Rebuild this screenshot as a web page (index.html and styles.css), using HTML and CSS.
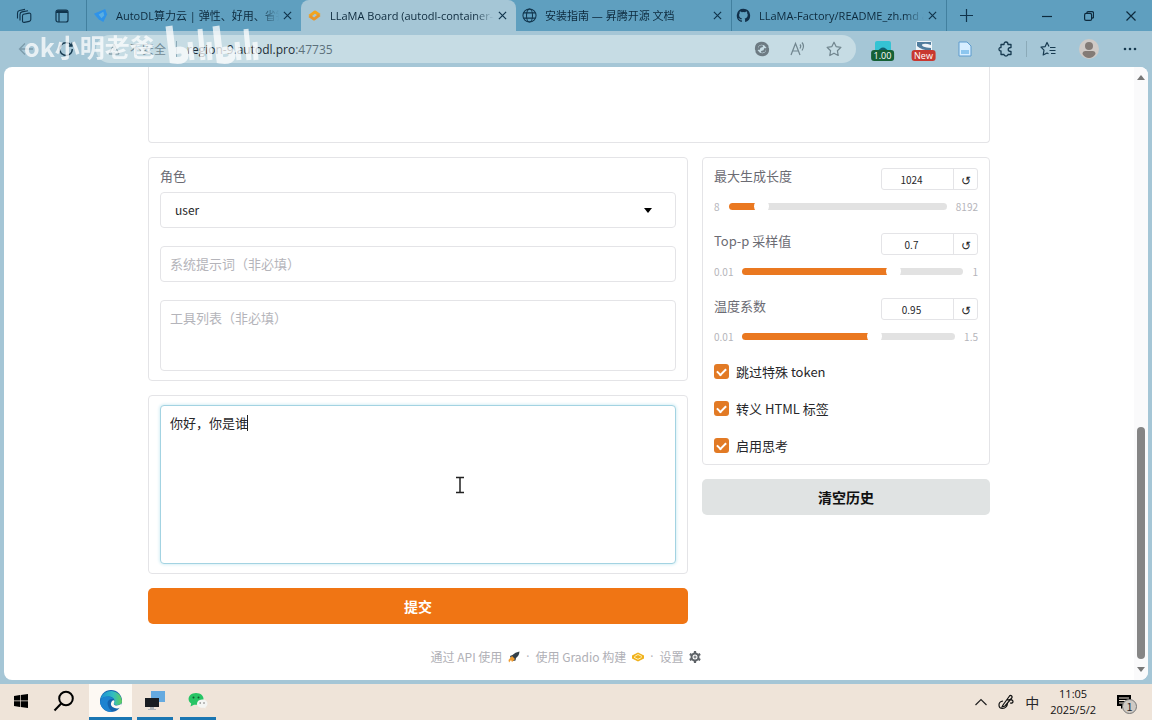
FILE: index.html
```html
<!DOCTYPE html>
<html lang="zh-CN">
<head>
    <meta charset="UTF-8">
    <title>LLaMA Board</title>
    <meta name="viewport" content="width=device-width, initial-scale=1">
    <link rel="stylesheet" href="styles.css">
</head>
<body>
    <header class="tabbar">
        <div class="tab-tools">
            <button type="button" aria-label="工作区">
                <svg width="16" height="16" viewBox="0 0 16 16" fill="none" stroke="#10344c" stroke-width="1.1"><path d="M7.500 6.200l5.500-1.100q1.800-.2 1.800 1.500v5q0 1.500-1.500 1.800l-5 1q-1.800.2-1.800-1.500V8q0-1.500 1-1.800z"/><path d="M4 12.500V6.500Q4 4.300 6 3.900L12 2.800M1.500 10.500V5Q1.500 3 3.500 2.500L9 1.400"/></svg>
            </button>
            <button type="button" aria-label="标签页操作">
                <svg width="16" height="16" viewBox="0 0 16 16" fill="none" stroke="#10344c" stroke-width="1.200"><rect x="2" y="2" width="12" height="12" rx="2"/><path d="M2 4.500h12M5 5v9" /><path d="M2.500 3.500h11" stroke-width="2.500"/></svg>
            </button>
        </div>
        <nav class="tabs">
            <a class="tab first" href="#">
                <svg class="tab-icon" viewBox="0 0 16 16"><path d="M1 6 13 1l2 6-4 8-5-3z" fill="#2e93ea"/><path d="M6 7l5-3 1 4-3 3z" fill="#5aaee2"/></svg>
                <span class="tab-title">AutoDL算力云 | 弹性、好用、省钱</span>
                <svg class="close" viewBox="0 0 10 10"><path d="M1 1l8 8M9 1l-8 8"/></svg>
            </a>
            <a class="tab active" href="#">
                <svg class="tab-icon" viewBox="0 0 16 16"><path d="M1.500 7.500 7.500 3q1-.5 2 0l5 3.500-2.500 2L8.500 6 4 9.500z" fill="#f2a51f"/><path d="M14.500 8.500 8.500 13q-1 .5-2 0l-5-3.500 2.500-2L7.500 10 12 6.500z" fill="#e8962a"/></svg>
                <span class="tab-title">LLaMA Board (autodl-container-a</span>
                <svg class="close" viewBox="0 0 10 10"><path d="M1 1l8 8M9 1l-8 8"/></svg>
            </a>
            <a class="tab" href="#">
                <svg class="tab-icon" viewBox="0 0 16 16" fill="none" stroke="#10344c" stroke-width="1.100"><circle cx="8" cy="8" r="7"/><ellipse cx="8" cy="8" rx="3.200" ry="7"/><path d="M1.800 5.200h12.400M1.800 10.800h12.400"/></svg>
                <span class="tab-title">安装指南 — 昇腾开源 文档</span>
                <svg class="close" viewBox="0 0 10 10"><path d="M1 1l8 8M9 1l-8 8"/></svg>
            </a>
            <a class="tab lined" href="#">
                <svg class="tab-icon" viewBox="0 0 16 16"><path fill="#12304a" d="M8 .8a7.200 7.200 0 0 0-2.300 14c.4.100.5-.2.500-.4v-1.300c-2 .4-2.500-.9-2.500-.9-.3-.8-.8-1-.8-1-.7-.5 0-.5 0-.5.700.1 1.100.8 1.100.8.700 1.100 1.700.8 2.100.6.100-.5.300-.8.500-1-1.600-.2-3.300-.8-3.300-3.600 0-.8.300-1.400.7-1.900 0-.2-.3-.9.100-1.900 0 0 .6-.2 2 .7a7 7 0 0 1 3.600 0c1.400-.9 2-.7 2-.7.400 1 .1 1.700.1 1.900.5.500.7 1.100.7 1.900 0 2.800-1.700 3.400-3.300 3.600.3.200.5.700.5 1.300v2c0 .2.100.5.500.4A7.200 7.200 0 0 0 8 .8z"/></svg>
                <span class="tab-title">LLaMA-Factory/README_zh.md a</span>
                <svg class="close" viewBox="0 0 10 10"><path d="M1 1l8 8M9 1l-8 8"/></svg>
            </a>
            <button type="button" class="new-tab" aria-label="新建标签页"><svg width="13" height="13" viewBox="0 0 13 13" stroke="#10344c" stroke-width="1.200"><path d="M6.500 0v13M0 6.500h13"/></svg></button>
        </nav>
        <div class="win-buttons">
            <button type="button" aria-label="最小化"><svg width="10" height="10" viewBox="0 0 10 10"><path d="M0 5.500h10"/></svg></button>
            <button type="button" aria-label="还原"><svg width="10" height="10" viewBox="0 0 10 10"><rect x=".6" y="2.400" width="7" height="7" rx="1.500"/><path d="M3 2.300V1.600q0-1 1-1h4q1.500 0 1.500 1.500v4q0 1-1.500 1"/></svg></button>
            <button type="button" aria-label="关闭"><svg width="10" height="10" viewBox="0 0 10 10"><path d="M.5.5l9 9M9.500.5l-9 9"/></svg></button>
        </div>
    </header>

    <div class="toolbar">
        <div class="nav-buttons">
            <button type="button" aria-label="后退"><svg width="16" height="14" viewBox="0 0 16 14" fill="none" stroke="#7c9bab" stroke-width="1.300"><path d="M15 7H1.500M7 1.500 1.500 7 7 12.500"/></svg></button>
            <button type="button" aria-label="刷新"><svg width="16" height="16" viewBox="0 0 16 16" fill="none" stroke="#173a50" stroke-width="1.400"><path d="M13.500 5A6.300 6.300 0 1 0 14.300 8M14 1.500V5h-3.500"/></svg></button>
        </div>
        <div class="address">
            <svg width="12" height="12" viewBox="0 0 12 12" fill="none" stroke="#6f8894"><path d="M6 1l5 10H1zM6 4.500v3.500M6 9v1"/></svg>
            <span class="insecure">不安全</span>
            <span class="divider"></span>
            <span class="url">region-9.autodl.pro<span class="port">:47735</span></span>
            <div class="address-icons">
                <svg width="16" height="16" viewBox="0 0 16 16" fill="none" stroke="#6d7b83" stroke-linecap="round"><path d="M2.500 8.500Q1.800 3 7 2.200q4-.4 6 3" stroke-width="3"/><path d="M13.500 7.500q.7 5.500-4.500 6.300-4 .4-6-3" stroke-width="3"/><path d="M5 8q0-2.500 3-2.700M11 8q0 2.500-3 2.700" stroke-width="2"/></svg>
                <svg width="16" height="16" viewBox="0 0 16 16" fill="none" stroke="#71868f" stroke-width="1.200"><path d="M1 14 5.500 2.500 10 14M2.700 10h5.600M10 3.500q1.500 1.500 0 4M12 1.500q3 3.500 0 8"/></svg>
                <svg width="16" height="16" viewBox="0 0 16 16" fill="none" stroke="#71868f" stroke-width="1.200" stroke-linejoin="round"><path d="M8 1.200l2.100 4.400 4.800.7-3.500 3.400.8 4.800L8 12.200l-4.200 2.300.8-4.800L1.100 6.300l4.800-.7z"/></svg>
            </div>
        </div>
        <div class="extensions">
            <button type="button" class="ext" aria-label="倍速"><svg width="16" height="16" viewBox="0 0 16 16"><rect width="16" height="16" rx="2" fill="#35c3d3"/><path d="M2 11q6-9 12 0z" fill="#10606f"/></svg><span class="badge green">1.00</span></button>
            <button type="button" class="ext" aria-label="扩展"><svg width="16" height="16" viewBox="0 0 16 16"><rect width="16" height="16" rx="2" fill="#eef4f8"/><path d="M1 1h14v3Q9 2 6 3.500 5 6 15 7v3Q5 9 1 5z" fill="#507d9e"/></svg><span class="badge red">New</span></button>
            <button type="button" class="ext" aria-label="文档"><svg width="14" height="16" viewBox="0 0 14 16"><path d="M1 1h8l4 4v10H1z" fill="#d7eeff" stroke="#5d9bce"/><path d="M3 9h8v4H3z" fill="#8cc6ef"/></svg></button>
            <button type="button" class="ext" aria-label="扩展管理"><svg width="16" height="16" viewBox="0 0 16 16" fill="none" stroke="#173a50" stroke-width="1.300" stroke-linejoin="round"><path d="M3 3.500h3Q6 1 8 1t2 2.500h3V6.500q-2.800 0-2.800 2t2.800 2v3H10Q10 15 8 15t-2-1.500H3V10Q1 10 1 8.200T3 6.500z"/></svg></button>
            <span class="divider"></span>
            <button type="button" class="ext" aria-label="收藏夹"><svg width="16" height="16" viewBox="0 0 16 16" fill="none" stroke="#173a50" stroke-width="1.200" stroke-linejoin="round"><path d="M9 5.500 7 1.500 5.200 5.600 1 6.200l3 3-.8 4.800L7 12l1.500.8M10 6.500h5.500M9.500 9.500h6M11 12.500h4.500"/></svg></button>
            <button type="button" class="ext" aria-label="用户"><svg width="20" height="20" viewBox="0 0 20 20"><circle cx="10" cy="10" r="10" fill="#cfcac6"/><circle cx="10" cy="7" r="4" fill="#837b76"/><path d="M3.500 15q0-3 3-3h7q3 0 3 3-2.500 4-6.500 4t-6.500-4z" fill="#837b76"/></svg></button>
            <button type="button" class="ext" aria-label="更多"><svg width="14" height="4" viewBox="0 0 14 4" fill="#173a50"><circle cx="2" cy="2" r="1.300"/><circle cx="7" cy="2" r="1.300"/><circle cx="12" cy="2" r="1.300"/></svg></button>
        </div>
    </div>

    <div class="viewport">
        <main class="page">
            <div class="container">
                <div class="chatbox"></div>
                <div class="columns">
                    <div class="left">
                        <div class="panel">
                            <label class="caption" for="role">角色</label>
                            <div class="select-wrap">
                                <select id="role"><option>user</option><option>observation</option></select>
                                <svg class="arrow" width="8" height="5" viewBox="0 0 8 5"><path d="M0 0h8L4 5z"/></svg>
                            </div>
                            <input type="text" class="field" aria-label="系统提示词" placeholder="系统提示词（非必填）">
                            <textarea class="field tools" aria-label="工具列表" placeholder="工具列表（非必填）"></textarea>
                        </div>
                        <div class="panel query-panel">
                            <textarea class="field query" aria-label="输入">你好，你是谁</textarea>
                            <span class="caret"></span>
                            <svg class="pointer" width="10" height="18" viewBox="0 0 10 18" fill="none" stroke="#222" stroke-width="1.500"><path d="M1 1.500h8M1 16.500h8M5 1.500v15"/></svg>
                        </div>
                        <button type="button" class="btn primary">提交</button>
                    </div>
                    <div class="right">
                        <div class="panel">
                            <div class="slider">
                                <div class="slider-head">
                                    <label for="max-len">最大生成长度</label>
                                    <div class="number"><input type="number" id="max-len" value="1024"><button type="button" aria-label="重置">↺</button></div>
                                </div>
                                <div class="slider-row"><span>8</span><input type="range" aria-label="最大生成长度" min="8" max="8192" value="1024" style="--fill: 14%"><span>8192</span></div>
                            </div>
                            <div class="slider">
                                <div class="slider-head">
                                    <label for="top-p">Top-p 采样值</label>
                                    <div class="number"><input type="number" id="top-p" value="0.7" step="0.01"><button type="button" aria-label="重置">↺</button></div>
                                </div>
                                <div class="slider-row"><span>0.01</span><input type="range" aria-label="Top-p 采样值" min="0.01" max="1" step="0.01" value="0.7" style="--fill: 68%"><span>1</span></div>
                            </div>
                            <div class="slider">
                                <div class="slider-head">
                                    <label for="temperature">温度系数</label>
                                    <div class="number"><input type="number" id="temperature" value="0.95" step="0.01"><button type="button" aria-label="重置">↺</button></div>
                                </div>
                                <div class="slider-row"><span>0.01</span><input type="range" aria-label="温度系数" min="0.01" max="1.5" step="0.01" value="0.95" style="--fill: 62%"><span>1.5</span></div>
                            </div>
                            <label class="check"><input type="checkbox" checked>跳过特殊 token</label>
                            <label class="check"><input type="checkbox" checked>转义 HTML 标签</label>
                            <label class="check"><input type="checkbox" checked>启用思考</label>
                        </div>
                        <button type="button" class="btn secondary">清空历史</button>
                    </div>
                </div>
            </div>
            <footer class="page-footer">
                <a href="#">通过 API 使用
                    <svg width="12" height="12" viewBox="0 0 12 12"><path d="M11.500.5Q7 1 4.500 4L2 5l1 3 2 2 2.500-.5L8 7q3-2 3.500-6.500z" fill="#333f48"/><path d="M4 5l3 3-3 3-1-2-2 2.500L.5 9z" fill="#f09a2c"/></svg>
                </a>
                <span class="dot">·</span>
                <a href="#">使用 Gradio 构建
                    <svg width="12" height="12" viewBox="0 0 12 12"><path d="M0 4.500 6 1.500l6 3v3l-6 3-6-3z" fill="#f0b11c"/><path d="M2.500 5.500 6 3.500l4 2M9.500 6.500 6 8.300l-4-2" fill="none" stroke="#fff2bb"/></svg>
                </a>
                <span class="dot">·</span>
                <a href="#">设置
                    <svg width="12" height="12" viewBox="0 0 12 12" fill="none" stroke="#5d6267"><circle cx="6" cy="6" r="3.500" stroke-width="2"/><path d="M6 0v2M6 10v2M.8 3l1.700 1M9.500 8l1.700 1M.8 9l1.700-1M9.500 4l1.700-1" stroke-width="2.200"/><circle cx="6" cy="6" r="1"/></svg>
                </a>
            </footer>
        </main>
        <div class="scrollbar">
            <svg width="8" height="5" viewBox="0 0 8 5"><path d="M0 5h8L4 0z"/></svg>
            <div class="thumb"></div>
            <svg width="8" height="5" viewBox="0 0 8 5"><path d="M0 0h8L4 5z"/></svg>
        </div>
    </div>

    <div class="taskbar">
        <button type="button" class="task" aria-label="开始"><svg width="16" height="16" viewBox="0 0 16 16"><path d="M1 3l6-.9V7.600H1zM7.700 2 15 1v6.600H7.700zM1 8.300h6v5.600L1 13zM7.700 8.300H15V15l-7.300-1z"/></svg></button>
        <button type="button" class="task" aria-label="搜索"><svg width="22" height="22" viewBox="0 0 22 22" fill="none" stroke="#000" stroke-width="2"><circle cx="13" cy="8.500" r="6.800"/><path d="M8.200 13.500 1.500 20.500"/></svg></button>
        <button type="button" class="task open current" aria-label="Edge">
            <svg width="22" height="22" viewBox="0 0 22 22">
                <defs>
                    <linearGradient id="edge-top" x1="0" x2="1"><stop offset="0" stop-color="#1c8fd6"/><stop offset=".6" stop-color="#32bdc0"/><stop offset="1" stop-color="#62cf5a"/></linearGradient>
                </defs>
                <circle cx="11" cy="11" r="11" fill="#1463ae"/>
                <path d="M.3 9.500A11 11 0 0 1 22 11q0 4-4.500 4-4 0-3.500-2 1-1 .5-3Q13 6.500 9 6.500 3 6.500.3 9.500z" fill="url(#edge-top)"/>
                <path d="M0 12Q1 6.500 8 6.500q4 .2 5.500 2.500Q8 8.500 7.500 13q0 5 5 8.800A11 11 0 0 1 0 12z" fill="#1d83d0"/>
                <path d="M14 13q-.8 1 .5 2 3 1.500 7.500-1.500l-1.500 4q-4 2-8-.5Q9.500 14.500 12 11q2-1.500 2.500 0z" fill="#fdf9f3"/>
            </svg>
        </button>
        <button type="button" class="task open" aria-label="远程桌面"><svg width="22" height="22" viewBox="0 0 22 22"><rect x="7" y="1" width="14" height="11" fill="#65aae0"/><path d="M1 8h14v9H1z" fill="#191d22"/><path d="M6 17h4v2h2v1H4v-1h2z" fill="#aeb4b8"/></svg></button>
        <button type="button" class="task open" aria-label="微信"><svg width="20" height="18" viewBox="0 0 20 18"><path d="M8 1c8 0 10 8 4 11-2 1-4 1-6 .7L2.500 14.500l.7-3C-2 8 1 1 8 1z" fill="#27c465"/><circle cx="5.500" cy="5.500" r="1" fill="#0f5a30"/><circle cx="10.500" cy="5.500" r="1" fill="#0f5a30"/><path d="M14 7.500c6 0 7 5.500 3.500 7.500v1.500L16 15.700c-9 1-9-8-2-8.200z" fill="#f4f5f3"/><circle cx="12.200" cy="11" r=".8" fill="#777"/><circle cx="16" cy="11" r=".8" fill="#777"/></svg></button>
        <div class="tray">
            <svg width="12" height="8" viewBox="0 0 12 8" fill="none" stroke="#222" stroke-width="1.200"><path d="M.5 7 6 1.500 11.500 7"/></svg>
            <svg width="16" height="16" viewBox="0 0 16 16" fill="none" stroke="#111" stroke-width="1.200"><path d="M5 11 11.500 2q1-1.200 2.200 0 1 1 0 2L7 12l-3 1zM5 7Q1 7.500 1 11q0 3.500 3.500 3.500Q9 14 9.500 9.500M9 6q6-1 6 1.500 0 2-3 1.500"/></svg>
            <span class="ime">中</span>
            <div class="clock"><span>11:05</span><span>2025/5/2</span></div>
            <div class="notice">
                <svg width="16" height="16" viewBox="0 0 16 16"><path d="M1 1h14v11H8l-3 3v-3H1z"/><path d="M3 4h10M3 6.500h10M3 9h6" stroke="#efe4d9"/></svg>
                <span class="notice-count">1</span>
            </div>
        </div>
    </div>

    <div class="watermark">
        <span>ok小明老爸</span>
        <svg width="94" height="42" viewBox="0 0 94 42" fill="none" stroke="#fff" stroke-width="7">
            <path d="M4 1l4 34q13 2 12-6-1-6-10-3"/><path d="M25 17l2 18M35 4l3 31M44 17l1 18" stroke-width="5"/>
            <path d="M51 1l4 34q13 2 12-6-1-6-10-3"/><path d="M72 17l2 18M81 4l3 31M90 17l1 18" stroke-width="5"/>
        </svg>
    </div>
</body>
</html>
```
FILE: styles.css
```css
* {
    box-sizing: border-box;
}
body {
    margin: 0;
    min-height: 100vh;
    display: flex;
    flex-direction: column;
    background: #a5c6d6;
    font-family: "Noto Sans CJK SC", sans-serif;
    font-size: 13px;
    color: #27272a;
}
button {
    border: none;
    background: none;
    padding: 0;
    font-family: inherit;
    color: inherit;
    display: flex;
    align-items: center;
    justify-content: center;
}
a {
    color: inherit;
    text-decoration: none;
}
svg {
    flex: none;
}

/* browser tabs */
.tabbar {
    display: flex;
    height: 31px;
    background: #5f9fbf;
    font-family: "Open Sans", "Noto Sans CJK SC", sans-serif;
    font-size: 11px;
    color: #0d2a3d;
}
.tab-tools {
    display: flex;
    align-items: center;
    gap: 22px;
    padding: 0 16px;
    width: 86px;
}
.tabs {
    display: flex;
    flex: 1;
    min-width: 0;
}
.tab {
    display: flex;
    align-items: center;
    flex: 0 1 215px;
    min-width: 0;
    padding: 0 9px 0 6px;
}
.tab.first {
    border-left: 1px solid #42809f;
}
.tab.lined {
    border-left: 1px solid #42809f;
    padding-left: 4px;
}
.tab.active {
    background: #a5c6d6;
    border-radius: 8px 8px 0 0;
}
.tab-icon {
    width: 15px;
    height: 15px;
    margin-right: 8px;
}
.tab-title {
    flex: 1;
    white-space: nowrap;
    overflow: hidden;
    line-height: 16px;
    mask-image: linear-gradient(to right, #000 88%, transparent);
}
.close {
    width: 9px;
    height: 9px;
    margin-left: 4px;
    stroke: #10344c;
    stroke-width: 1.3;
}
.new-tab {
    width: 40px;
    border-left: 1px solid #42809f;
}
.win-buttons {
    display: flex;
}
.win-buttons button {
    width: 42px;
}
.win-buttons svg {
    fill: none;
    stroke: #0d2a3d;
    stroke-width: 1.2;
}

/* address bar */
.toolbar {
    display: flex;
    align-items: center;
    height: 36px;
    font-family: "Open Sans", "Noto Sans CJK SC", sans-serif;
}
.nav-buttons {
    display: flex;
    gap: 24px;
    padding-left: 18px;
    width: 96px;
}
.address {
    display: flex;
    align-items: center;
    flex: 1;
    height: 28px;
    gap: 10px;
    padding: 0 14px 0 12px;
    border-radius: 14px;
    background: #c6dce4;
    font-size: 12px;
}
.insecure {
    color: #6f8894;
}
.divider {
    width: 1px;
    height: 16px;
    background: #8baab8;
}
.url {
    color: #1d2c35;
}
.port {
    color: #5c717c;
}
.address-icons {
    display: flex;
    gap: 20px;
    margin-left: auto;
}
.extensions {
    display: flex;
    align-items: center;
    padding: 0 2px 0 6px;
}
.ext {
    position: relative;
    width: 41px;
    height: 28px;
}
.badge {
    position: absolute;
    top: 15px;
    left: 50%;
    transform: translateX(-50%);
    padding: 0 3px;
    border-radius: 3px;
    font-size: 9px;
    line-height: 11px;
    color: #fff;
}
.green {
    background: #146035;
}
.red {
    background: #c8372f;
}

/* web page */
.viewport {
    display: flex;
    flex: 1;
    margin: 0 4px 4px;
    border-radius: 8px;
    background: #fff;
    overflow: hidden;
}
.page {
    flex: 1;
    min-width: 0;
}
.container {
    max-width: 842px;
    margin: 0 auto;
}
.chatbox {
    height: 76px;
    border: 1px solid #e4e4e7;
    border-top: none;
    border-radius: 0 0 4px 4px;
    margin-bottom: 14px;
}
.columns {
    display: grid;
    grid-template-columns: 15fr 8fr;
    gap: 14px;
}
.left, .right {
    display: flex;
    flex-direction: column;
    gap: 14px;
    min-width: 0;
}
.panel {
    display: flex;
    flex-direction: column;
    padding: 9px 11px;
    border: 1px solid #e4e4e7;
    border-radius: 4px;
}
.caption {
    line-height: 18px;
    margin-bottom: 7px;
    color: #6b6b73;
}
.select-wrap {
    position: relative;
    margin-bottom: 18px;
}
select {
    appearance: none;
    display: block;
    width: 100%;
    height: 36px;
    padding: 0 14px 1px;
    border: 1px solid #e4e4e7;
    border-radius: 4px;
    background: #fff;
    font-family: inherit;
    font-size: 12px;
    color: #27272a;
}
.arrow {
    position: absolute;
    top: 16px;
    right: 24px;
}
.field {
    display: block;
    width: 100%;
    height: 36px;
    padding: 7px 9px 9px;
    border: 1px solid #e4e4e7;
    border-radius: 4px;
    outline: none;
    resize: none;
    font-family: inherit;
    font-size: 13px;
    line-height: 19px;
    color: #27272a;
}
.field::placeholder {
    color: #b4b4ba;
}
.tools {
    height: 71px;
    margin-top: 18px;
}
.query-panel {
    position: relative;
}
.query {
    height: 159px;
    border-color: #a3d3e2;
    box-shadow: 0 0 3px 1px #d9f0f6;
}
.caret {
    position: absolute;
    top: 19px;
    left: 98px;
    width: 1px;
    height: 16px;
    background: #222;
}
.pointer {
    position: absolute;
    top: 80px;
    left: 306px;
}
.btn {
    height: 36px;
    padding-bottom: 1px;
    border-radius: 5px;
    font-size: 14px;
    font-weight: bold;
}
.primary {
    background: #f07514;
    color: #fff;
}
.secondary {
    background: #e0e3e3;
    color: #111;
}

/* generation settings */
.slider {
    height: 65px;
}
.slider-head {
    display: flex;
    justify-content: space-between;
    color: #6b6b73;
    line-height: 18px;
}
.number {
    display: flex;
    width: 97px;
    height: 22px;
    margin-top: 1px;
    border: 1px solid #e4e4e7;
    border-radius: 3px;
}
.number input {
    appearance: textfield;
    flex: 1;
    min-width: 0;
    padding: 0 12px 0 0;
    border: none;
    background: none;
    text-align: center;
    font-family: inherit;
    font-size: 10px;
    color: #27272a;
}
.number input::-webkit-inner-spin-button {
    appearance: none;
    margin: 0;
}
.number button {
    width: 24px;
    border-left: 1px solid #e4e4e7;
    font-size: 12px;
    color: #27272a;
}
.slider-row {
    display: flex;
    align-items: center;
    gap: 9px;
    height: 14px;
    margin-top: 9px;
    font-size: 10px;
    color: #b4b4ba;
}
.slider-row input {
    appearance: none;
    flex: 1;
    min-width: 0;
    height: 7px;
    margin: 0;
    border-radius: 4px;
    background: linear-gradient(to right, #ea7820 var(--fill), #e2e2e2 var(--fill));
}
.slider-row input::-webkit-slider-thumb {
    appearance: none;
    width: 15px;
    height: 15px;
    border-radius: 50%;
    background: #fff;
}
.check {
    display: flex;
    align-items: center;
    gap: 7px;
    height: 19px;
    margin-bottom: 18px;
}
.check:last-child {
    margin-bottom: 0;
}
.check input {
    appearance: none;
    width: 15px;
    height: 15px;
    margin: 0;
    border-radius: 3px;
    background: #e27a25;
    display: grid;
    place-items: center;
}
.check input:checked::before {
    content: "";
    width: 7px;
    height: 4px;
    border-left: 2px solid #fff;
    border-bottom: 2px solid #fff;
    transform: translateY(-1px) rotate(-45deg);
}
.page-footer {
    display: flex;
    justify-content: center;
    gap: 6px;
    padding: 23px 6px 12px 0;
    font-size: 12px;
    line-height: 20px;
    color: #b0b0b6;
}
.page-footer a {
    display: flex;
    align-items: center;
    gap: 6px;
}
.dot {
    font-family: "Open Sans", sans-serif;
}
.scrollbar {
    display: flex;
    flex-direction: column;
    align-items: center;
    width: 14px;
    padding: 8px 0;
    background: #fafafb;
    fill: #777;
}
.thumb {
    width: 8px;
    height: 232px;
    margin: auto 0 8px;
    border-radius: 4px;
    background: #858585;
}

/* windows taskbar */
.taskbar {
    display: flex;
    height: 36px;
    background: #efe4d9;
    padding-left: 3px;
}
.task {
    width: 36px;
    margin-right: 7px;
    border-bottom: 3px solid transparent;
}
.task.open {
    border-color: #1a76b2;
}
.task.current {
    width: 43px;
    background: #fdf9f3;
    margin-right: 5px;
}
.tray {
    display: flex;
    align-items: center;
    gap: 11px;
    margin-left: auto;
    padding-right: 20px;
}
.ime {
    font-size: 14px;
}
.clock {
    display: flex;
    flex-direction: column;
    align-items: center;
    font-family: "Open Sans", sans-serif;
    font-size: 11px;
    line-height: 16px;
    color: #111;
}
.notice {
    position: relative;
    display: flex;
    margin-left: 9px;
}
.notice-count {
    position: absolute;
    top: 5px;
    left: 6px;
    width: 15px;
    height: 15px;
    border: 1px solid #777;
    border-radius: 50%;
    background: #cfcac4;
    font-size: 11px;
    line-height: 13px;
    text-align: center;
}

/* stream overlay */
.watermark {
    position: absolute;
    top: 25px;
    left: 24px;
    display: flex;
    align-items: center;
    gap: 10px;
    font-size: 25px;
    font-weight: bold;
    line-height: 42px;
    color: #fff;
    opacity: 0.75;
    pointer-events: none;
}
```
